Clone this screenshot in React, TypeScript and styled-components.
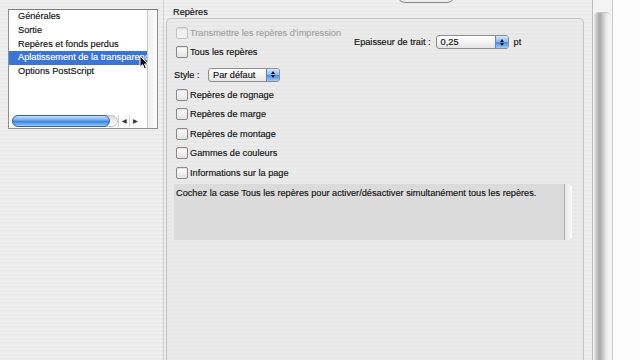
import { FC } from "react";
import styled, { createGlobalStyle } from "styled-components";

const GlobalStyle = createGlobalStyle`
  html, body {
    margin: 0;
    padding: 0;
  }
  body {
    width: 640px;
    height: 360px;
    overflow: hidden;
    background: #fdfdfd;
    font-family: "Liberation Sans", Arial, sans-serif;
    font-size: 9.2px;
    color: #111;
    -webkit-text-stroke: 0.15px currentColor;
  }
`;

const pinstripe = (a: string, b: string) =>
  `repeating-linear-gradient(to bottom, ${a} 0px, ${a} 2px, ${b} 2px, ${b} 4px)`;

const Screen = styled.div`
  display: flex;
  width: 640px;
  height: 360px;
  overflow: hidden;
`;

const Window = styled.div`
  flex: 0 0 592px;
  display: flex;
  background: ${pinstripe("#efefef", "#ebebeb")};
`;

const Sidebar = styled.div`
  flex: 0 0 164px;
  box-sizing: border-box;
  padding: 9px 0 0 8px;
  border-right: 1px solid #d0d0d0;
`;

const ListBox = styled.div`
  position: relative;
  width: 150px;
  height: 120px;
  box-sizing: border-box;
  border: 1px solid #8f8f8f;
  border-top-color: #7a7a7a;
  background: #fff;
  display: grid;
  grid-template-columns: minmax(0, 1fr) 10px;
  grid-template-rows: minmax(0, 1fr) 14px;
`;

const Items = styled.div`
  min-width: 0;
  display: flex;
  flex-direction: column;
  overflow: hidden;
`;

const Item = styled.div<{ $selected?: boolean }>`
  flex: 0 0 13.75px;
  line-height: 13.75px;
  padding-left: 9px;
  white-space: nowrap;
  overflow: hidden;
  color: ${(p) => (p.$selected ? "#fff" : "#111")};
  background: ${(p) => (p.$selected ? "#3a74d6" : "transparent")};
`;

const VTrack = styled.div`
  grid-column: 2;
  grid-row: 1 / span 2;
  border-left: 1px solid #c9c9c9;
  background: linear-gradient(to right, #f0f0f0, #fbfbfb);
`;

const HScroll = styled.div`
  grid-column: 1;
  grid-row: 2;
  min-width: 0;
  display: flex;
  align-items: center;
  padding: 0 4px 1px 3px;
`;

const Track = styled.div`
  display: flex;
  align-items: center;
  width: 106px;
  height: 12px;
  box-sizing: border-box;
  border-radius: 6px;
  background: linear-gradient(#d9d9d9, #f4f4f4 60%, #fff);
  border: 1px solid #c4c4c4;
`;

const Thumb = styled.div`
  width: 98px;
  height: 12px;
  margin-left: -1px;
  box-sizing: border-box;
  border-radius: 6px;
  border: 1px solid #34629f;
  background: linear-gradient(#cfe2fa, #78aef0 40%, #3f83e2 55%, #6fb0f5 85%, #a5d0fa);
`;

const Arrow = styled.div`
  width: 10px;
  height: 12px;
  display: flex;
  align-items: center;
  justify-content: center;
  border-left: 1px solid #d2d2d2;
  color: #333;
  font-size: 6px;
`;

const Cursor = styled.svg`
  position: absolute;
  left: 130px;
  top: 45px;
`;

const Main = styled.div`
  flex: 1;
  display: flex;
  flex-direction: column;
  padding: 0 8px 0 2px;
`;

const Header = styled.div`
  height: 18px;
  display: flex;
  align-items: flex-start;
`;

const GroupTitle = styled.div`
  flex: 0 0 224px;
  padding: 7px 0 0 7px;
`;

const TopButton = styled.div`
  width: 58px;
  height: 20px;
  margin-top: -17px;
  box-sizing: border-box;
  border: 1px solid #8a8a8a;
  border-radius: 8px;
  background: linear-gradient(#fafafa, #ffffff 60%, #e9e9e9);
`;

const GroupBox = styled.div`
  flex: 1;
  border: 1px solid #c3c3c3;
  border-bottom: none;
  border-radius: 5px 5px 0 0;
  padding: 4px 0 0 9px;
  background: ${pinstripe("#ebebeb", "#e7e7e7")};
  display: flex;
  flex-direction: column;
`;

const TopSection = styled.div`
  display: flex;
  align-items: center;
`;

const TopLeft = styled.div`
  flex: 0 0 178px;
  display: flex;
  flex-direction: column;
`;

const Row = styled.div`
  height: 19.6px;
  display: flex;
  align-items: center;
`;

const StyleRow = styled(Row)`
  margin: 3px 0 0 -2px;
`;

const Box = styled.span<{ $disabled?: boolean }>`
  flex: 0 0 12px;
  height: 12px;
  box-sizing: border-box;
  border-radius: 2px;
  border: 1px solid ${(p) => (p.$disabled ? "#c6c6c6" : "#8a8a8a")};
  background: ${(p) =>
    p.$disabled ? "#f1f1f1" : "linear-gradient(#ffffff, #f2f2f2 50%, #e2e2e2)"};
  box-shadow: inset 0 1px 1px rgba(0, 0, 0, 0.12);
`;

const Label = styled.span<{ $disabled?: boolean }>`
  margin-left: 2px;
  white-space: nowrap;
  color: ${(p) => (p.$disabled ? "#a2a2a2" : "#111")};
`;

const FieldLabel = styled.span<{ $width?: number }>`
  white-space: nowrap;
  ${(p) => (p.$width ? `width: ${p.$width}px;` : "")}
`;

const Popup = styled.div<{ $width: number }>`
  width: ${(p) => p.$width}px;
  height: 14px;
  box-sizing: border-box;
  display: flex;
  border: 1px solid #8e8e8e;
  border-radius: 3px;
  background: linear-gradient(#ffffff, #f3f3f3 50%, #e4e4e4);
  overflow: hidden;
`;

const PopupValue = styled.span`
  flex: 1;
  padding-left: 4px;
  line-height: 12px;
  white-space: nowrap;
`;

const Stepper = styled.span`
  width: 12px;
  border-left: 1px solid #5c86c2;
  background: linear-gradient(#d5e7fc, #8fbdf4 45%, #4b8ee6 55%, #9ccbf8);
  display: flex;
  flex-direction: column;
  align-items: center;
  justify-content: center;
  gap: 1px;
`;

const Tri = styled.span<{ $down?: boolean }>`
  width: 0;
  height: 0;
  border-left: 2px solid transparent;
  border-right: 2px solid transparent;
  ${(p) =>
    p.$down ? "border-top: 3px solid #111;" : "border-bottom: 3px solid #111;"}
`;

const Thickness = styled.div`
  display: flex;
  align-items: center;
  gap: 5px;
  margin-top: -1px;
`;

const Description = styled.div`
  margin: 1px 0 0 -2px;
  width: 398px;
  height: 56px;
  display: flex;
  background: #dbdbdb;
`;

const DescriptionText = styled.div`
  flex: 1;
  padding: 3px 0 0 2px;
  line-height: 12px;
`;

const DescriptionStrip = styled.div`
  width: 7px;
  border-left: 1px solid #b3b3b3;
  border-radius: 0 3px 3px 0;
  background: linear-gradient(to right, #e6e6e6, #fbfbfb);
`;

const Edge = styled.div`
  flex: 0 0 21px;
  box-sizing: border-box;
  border-left: 1px solid #bdbdbd;
  border-right: 1px solid #cdcdcd;
  background: #f3f3f3;
  display: flex;
  padding: 12px 1px 0;
`;

const EdgeTrack = styled.div`
  flex: 1;
  border-radius: 5px 5px 0 0;
  border-top: 1px solid #c6c6c6;
  background: linear-gradient(
    to right,
    #e9e9e9 0%,
    #bcbcbc 20%,
    #a9a9a9 35%,
    #cdcdcd 55%,
    #eeeeee 75%,
    #f7f7f7 100%
  );
`;

const Check: FC<{ label: string; disabled?: boolean }> = ({ label, disabled }) => (
  <Row>
    <Box $disabled={disabled} />
    <Label $disabled={disabled}>{label}</Label>
  </Row>
);

const Select: FC<{ value: string; width: number }> = ({ value, width }) => (
  <Popup $width={width}>
    <PopupValue>{value}</PopupValue>
    <Stepper>
      <Tri />
      <Tri $down />
    </Stepper>
  </Popup>
);

const sections = [
  "Générales",
  "Sortie",
  "Repères et fonds perdus",
  "Aplatissement de la transparence",
  "Options PostScript",
];

const marks = [
  "Repères de rognage",
  "Repères de marge",
  "Repères de montage",
  "Gammes de couleurs",
  "Informations sur la page",
];

export default function App() {
  return (
    <>
      <GlobalStyle />
      <Screen>
        <Window>
          <Sidebar>
            <ListBox>
              <Items>
                {sections.map((s, i) => (
                  <Item key={s} $selected={i === 3}>
                    {s}
                  </Item>
                ))}
              </Items>
              <VTrack />
              <HScroll>
                <Track>
                  <Thumb />
                </Track>
                <Arrow>◀</Arrow>
                <Arrow>▶</Arrow>
              </HScroll>
              <Cursor width="11" height="15" viewBox="0 0 11 15">
                <path
                  d="M1 1 L1 12 L3.6 9.6 L5.6 14 L7.4 13.2 L5.5 9 L9 9 Z"
                  fill="#000"
                  stroke="#fff"
                  strokeWidth="1"
                  strokeLinejoin="round"
                />
              </Cursor>
            </ListBox>
          </Sidebar>
          <Main>
            <Header>
              <GroupTitle>Repères</GroupTitle>
              <TopButton />
            </Header>
            <GroupBox>
              <TopSection>
                <TopLeft>
                  <Check label="Transmettre les repères d'impression" disabled />
                  <Check label="Tous les repères" />
                </TopLeft>
                <Thickness>
                  <FieldLabel>Epaisseur de trait :</FieldLabel>
                  <Select value="0,25" width={73} />
                  <span>pt</span>
                </Thickness>
              </TopSection>
              <StyleRow>
                <FieldLabel $width={34}>Style :</FieldLabel>
                <Select value="Par défaut" width={72} />
              </StyleRow>
              {marks.map((m) => (
                <Check key={m} label={m} />
              ))}
              <Description>
                <DescriptionText>
                  Cochez la case Tous les repères pour activer/désactiver
                  simultanément tous les repères.
                </DescriptionText>
                <DescriptionStrip />
              </Description>
            </GroupBox>
          </Main>
        </Window>
        <Edge>
          <EdgeTrack />
        </Edge>
      </Screen>
    </>
  );
}
